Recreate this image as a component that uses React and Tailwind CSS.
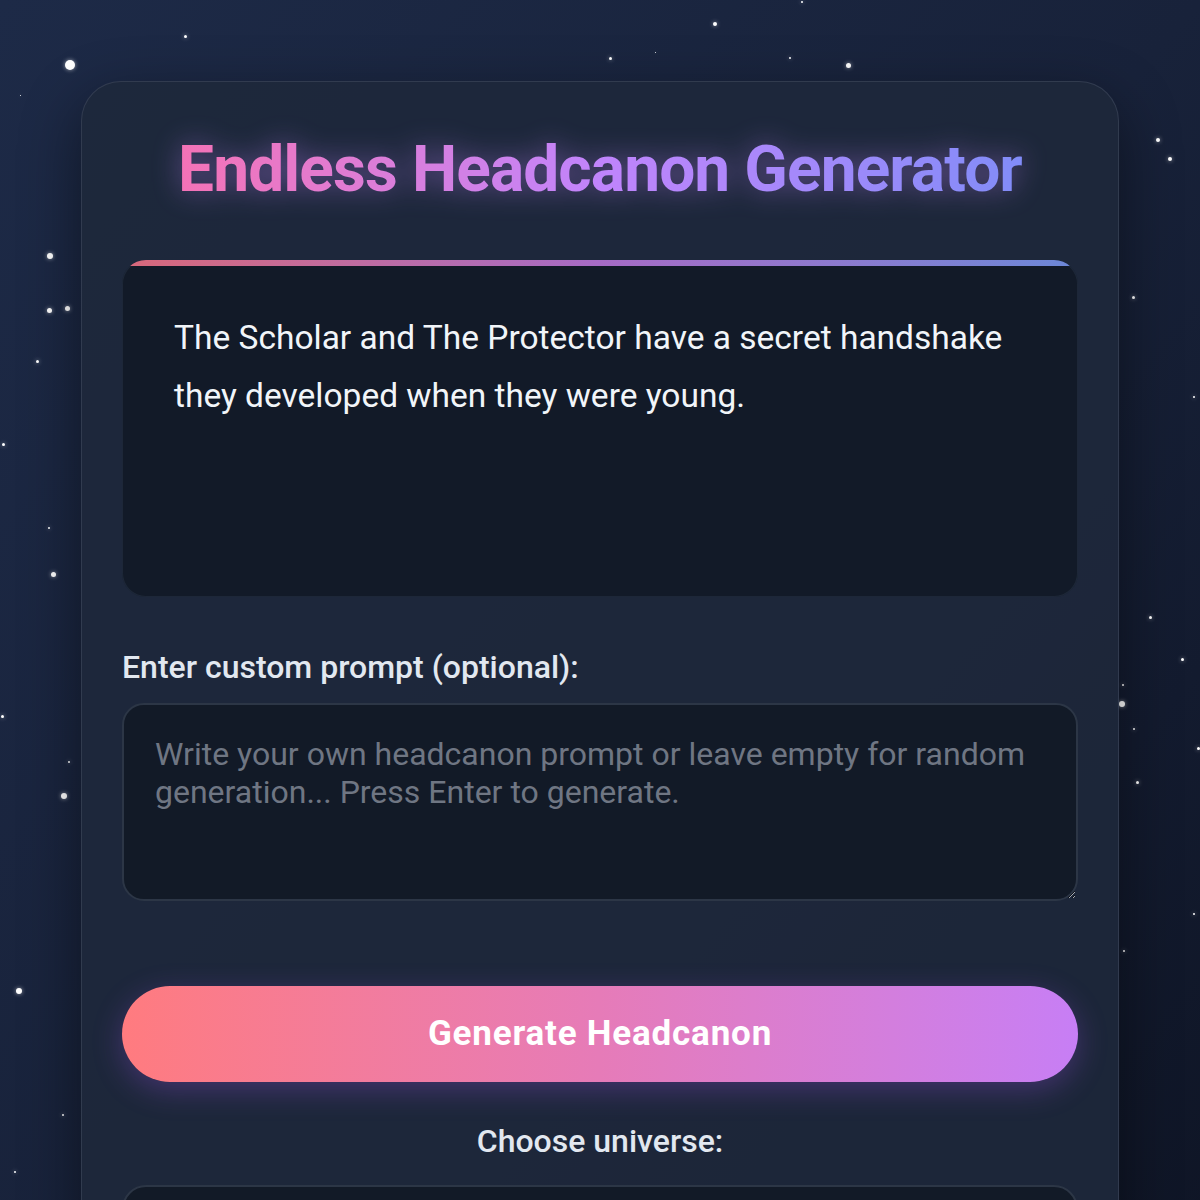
import { useState } from 'react';

// scattered background stars: [x, y, diameter]
const STARS = [
  [70, 65, 10], [185, 36, 3], [20, 95, 1], [802, 2, 2], [715, 24, 4],
  [610, 58, 3], [655, 52, 1], [790, 58, 2], [848, 65, 5], [1158, 140, 4],
  [1170, 159, 4], [1133, 297, 3], [1194, 397, 2], [50, 256, 6], [49, 310, 5],
  [67, 308, 5], [37, 361, 3], [3, 444, 3], [49, 528, 2], [53, 574, 5],
  [1150, 617, 3], [1182, 659, 3], [1123, 685, 2], [1122, 704, 6], [1134, 729, 2],
  [1198, 748, 3], [1137, 782, 3], [69, 762, 2], [64, 796, 6], [2, 716, 3],
  [1194, 914, 2], [1124, 951, 2], [19, 991, 6], [63, 1115, 2], [15, 1172, 2],
];

export default function App() {
  const [prompt, setPrompt] = useState('');
  const [headcanon] = useState(
    'The Scholar and The Protector have a secret handshake they developed when they were young.'
  );

  return (
    <div className="relative min-h-[1200px] overflow-hidden bg-gradient-to-br from-[#1d2a47] via-[#18223a] to-[#0e1424] font-['Roboto',sans-serif]">
      {/* Stars */}
      {STARS.map(([x, y, d], i) => (
        <span
          key={i}
          className="absolute rounded-full bg-white shadow-[0_0_4px_rgba(255,255,255,0.6)]"
          style={{ left: x - d / 2, top: y - d / 2, width: d, height: d }}
        />
      ))}

      <div className="relative mx-[81px] pt-[81px]">
        <div className="rounded-[40px] border border-[#3a4558]/70 bg-[#1e283b]/90 px-10 pt-[50px] pb-20 shadow-[0_20px_60px_rgba(0,0,0,0.45)]">
          {/* Title */}
          <h1 className="text-center text-[64px] font-bold leading-[76px] tracking-[-0.9px] drop-shadow-[0_0_14px_rgba(192,132,252,0.45)]">
            <span className="bg-gradient-to-r from-[#f472b6] via-[#c084fc] to-[#818cf8] bg-clip-text text-transparent">
              Endless Headcanon Generator
            </span>
          </h1>

          {/* Generated headcanon */}
          <div className="mt-[52px] h-[337px] overflow-hidden rounded-[24px] bg-[#121a28] shadow-[inset_0_0_0_1px_rgba(51,65,85,0.35)]">
            <div className="h-[6px] bg-gradient-to-r from-[#d8687a] via-[#a66bc6] to-[#6b88d8]" />
            <p className="px-[52px] pt-[43px] text-[33.5px] leading-[58px] text-[#f1f5f9]">
              {headcanon}
            </p>
          </div>

          {/* Custom prompt */}
          <label className="mt-[53px] block text-[32px] font-medium leading-[34px] text-[#e2e8f0]">
            Enter custom prompt (optional):
          </label>
          <textarea
            value={prompt}
            onChange={(e) => setPrompt(e.target.value)}
            placeholder="Write your own headcanon prompt or leave empty for random generation... Press Enter to generate."
            className="mt-[19px] block h-[198px] w-full resize-y rounded-[22px] border-2 border-[#2c3646] bg-[#121a27] px-[31px] pt-[30px] text-[32px] leading-[38px] text-[#f1f5f9] placeholder:text-[#6f7683] focus:outline-none"
          />

          <button
            type="button"
            className="mt-[85px] block h-[96px] w-full rounded-full bg-gradient-to-r from-[#ff7b7f] via-[#e67bb8] to-[#c77ef5] text-[35px] font-bold tracking-[0.8px] text-white shadow-[0_8px_30px_rgba(168,85,247,0.28)]"
          >
            Generate Headcanon
          </button>

          <p className="mt-[41px] text-center text-[32px] font-medium leading-[36px] text-[#e2e8f0]">
            Choose universe:
          </p>
          <div className="mt-[26px] h-[90px] rounded-[24px] border-2 border-[#2c3646] bg-[#121a27]" />
        </div>
      </div>
    </div>
  );
}
